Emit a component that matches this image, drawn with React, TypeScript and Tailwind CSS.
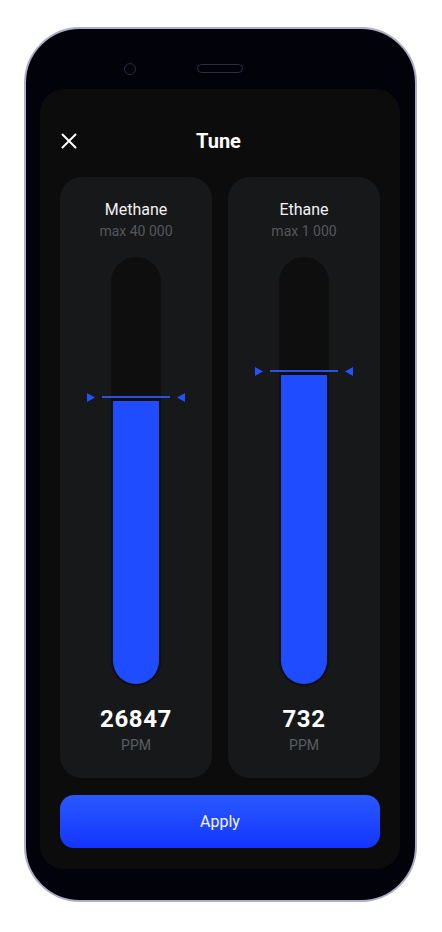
import React from 'react';

interface Gas {
    name: string;
    max: number;
    value: number;
}

const gases: Gas[] = [
    { name: 'Methane', max: 40000, value: 26847 },
    { name: 'Ethane', max: 1000, value: 732 },
];

const TRACK_INNER = 422;

const formatMax = (n: number) => n.toLocaleString('en-US').replace(/,/g, ' ');

const GasCard: React.FC<{ gas: Gas }> = ({ gas }) => {
    const fill = Math.round((gas.value / gas.max) * TRACK_INNER);

    return (
        <div className="flex-1 h-[601px] rounded-[22px] bg-[#17181a] flex flex-col items-center pt-[22px] pb-[23px]">
            <div className="text-[16px] leading-[21px] text-[#f2f2f2]">{gas.name}</div>
            <div className="mt-[2px] text-[14px] leading-[19px] text-[#55575c]">max {formatMax(gas.max)}</div>

            <div className="relative mt-[16px] w-[50px] h-[429px] rounded-full bg-[#0e0e0f] p-[2px] flex flex-col justify-end">
                <div className="w-full rounded-b-full bg-[#1f4cff]" style={{ height: fill }} />
                {/* level marker */}
                <div
                    className="absolute left-[-24px] w-[98px] h-[8px] flex items-center justify-between"
                    style={{ bottom: fill + 2 }}
                >
                    <svg width="8" height="9" viewBox="0 0 8 9">
                        <path d="M0 0 L8 4.5 L0 9 Z" fill="#2450ff" />
                    </svg>
                    <div className="w-[68px] h-[2px] bg-[#2a50e0]" />
                    <svg width="8" height="9" viewBox="0 0 8 9">
                        <path d="M8 0 L0 4.5 L8 9 Z" fill="#2450ff" />
                    </svg>
                </div>
            </div>

            <div className="mt-[18px] text-[24px] leading-[30px] font-bold text-white tracking-wide">{gas.value}</div>
            <div className="mt-[2px] text-[14px] leading-[18px] text-[#5a5d63]">PPM</div>
        </div>
    );
};

const App: React.FC = () => {
    return (
        <div className="w-[442px] h-[932px] bg-white pt-[27px] pl-[24px]" style={{ fontFamily: 'Roboto, "Noto Sans", sans-serif' }}>
            <div className="w-[393px] h-[875px] rounded-[56px] border-2 border-[#aeacc6] bg-[#02020a] flex flex-col items-center">
                <div className="h-[60px] w-full relative flex items-center">
                    <div className="absolute left-[98px] top-[34px] w-[12px] h-[12px] rounded-full border border-[#2c2c42]" />
                    <div className="absolute left-[171px] top-[35px] w-[46px] h-[9px] rounded-full border border-[#2c2c42]" />
                </div>

                <div className="ml-[-1px] w-[360px] h-[780px] rounded-[24px] bg-[#0c0c0c] px-[20px] pt-[36px] pb-[21px] flex flex-col">
                    <div className="relative h-[32px] flex items-center justify-center">
                        <svg className="absolute left-[1px]" width="16" height="16" viewBox="0 0 16 16">
                            <path d="M1.5 1.5 L14.5 14.5 M14.5 1.5 L1.5 14.5" stroke="#ffffff" strokeWidth="2" strokeLinecap="round" />
                        </svg>
                        <span className="text-[20px] font-bold text-white ml-[-3px]">Tune</span>
                    </div>

                    <div className="mt-[20px] flex gap-[16px]">
                        {gases.map(g => (
                            <GasCard key={g.name} gas={g} />
                        ))}
                    </div>

                    <button className="mt-[17px] h-[53px] w-full rounded-[14px] bg-gradient-to-b from-[#2b57ff] to-[#1434ff] text-[#f4f6ff] text-[16px] font-normal">
                        Apply
                    </button>
                </div>
            </div>
        </div>
    );
};

export default App;
